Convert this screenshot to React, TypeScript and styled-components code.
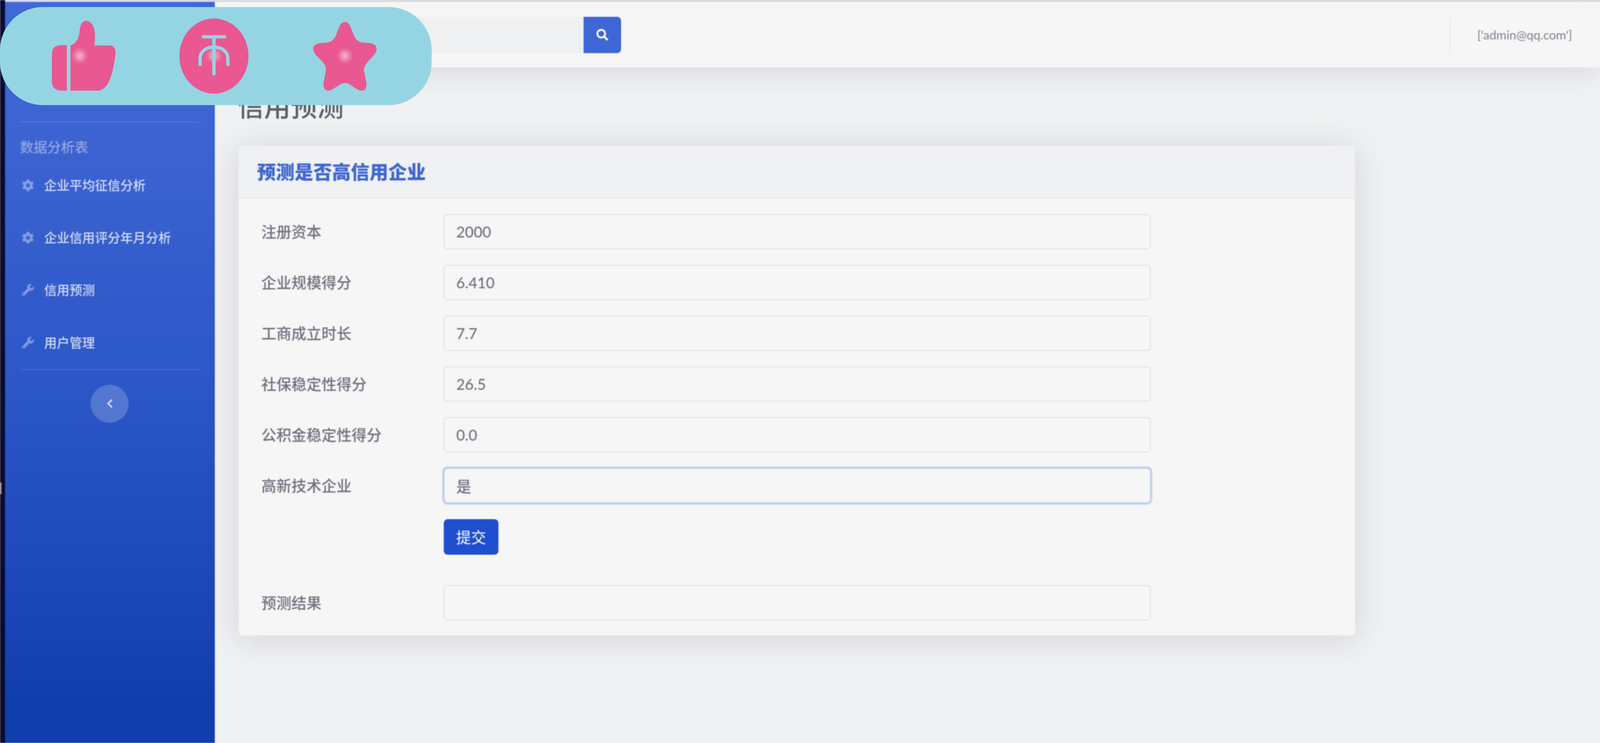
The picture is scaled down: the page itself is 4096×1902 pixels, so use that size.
import React from "react";
import styled, { createGlobalStyle } from "styled-components";
import { FaCog, FaWrench, FaChevronLeft, FaSearch } from "react-icons/fa";

const Global = createGlobalStyle`
  html, body { margin: 0; padding: 0; background: #f0f1f3; overflow: hidden; }
  * { box-sizing: border-box; }
  body { font-family: Lato, "Noto Sans CJK SC", sans-serif; }
`;

const Stage = styled.div`
  position: relative;
  width: 4096px;
  height: 1902px;
  overflow: hidden;
`;
const Shell = styled.div`
  display: flex;
  height: 100%;
  filter: blur(1.3px);
`;
const Strip = styled.div`
  position: relative;
  flex: 0 0 13px;
  background: #0c0c30;
`;
const StripMark = styled.span`
  position: absolute;
  left: 0;
  top: 1235px;
  width: 4px;
  height: 30px;
  background: #8f8f9c;
`;
const Sidebar = styled.aside`
  flex: 0 0 537px;
  border-top: 5px solid #d5d8ef;
  padding: 306px 40px 0 38px;
  background: linear-gradient(180deg, #4069d8 0%, #3d63d2 20%, #2c58c8 50%, #1f4abc 75%, #113ead 95%);
`;
const SideRule = styled.div`
  height: 2px;
  background: rgba(255, 255, 255, 0.13);
`;
const SideHeading = styled.div`
  margin-top: 41px;
  margin-bottom: 9px;
  font-size: 35px;
  line-height: 44px;
  font-weight: 500;
  color: rgba(255, 255, 255, 0.42);
`;
const NavItem = styled.div`
  display: flex;
  align-items: center;
  gap: 26px;
  height: 134.4px;
  padding-left: 5px;
  font-size: 32.5px;
  font-weight: 500;
  color: rgba(255, 255, 255, 0.78);
  span { position: relative; top: -2px; }
  svg { width: 31px; height: 31px; color: rgba(255, 255, 255, 0.38); flex: none; }
`;
const Toggle = styled.div`
  width: 97px;
  height: 97px;
  margin: 38px auto 0;
  border-radius: 50%;
  display: flex;
  align-items: center;
  justify-content: center;
  background: rgba(255, 255, 255, 0.2);
  color: rgba(255, 255, 255, 0.75);
  svg { width: 20px; height: 26px; }
`;
const Main = styled.main`
  flex: 1;
  min-width: 0;
  background: #f0f1f3;
`;
const TopBar = styled.header`
  display: flex;
  align-items: center;
  height: 173px;
  padding: 0 71px 0 50px;
  border-top: 5px solid #d9d9d9;
  background: #f6f6f6;
  box-shadow: 0 10px 70px rgba(58, 59, 69, 0.14);
  position: relative;
`;
const SearchInput = styled.div`
  width: 894px;
  height: 93px;
  background: #eef0f2;
`;
const SearchButton = styled.button`
  width: 96px;
  height: 93px;
  padding: 0;
  border: 0;
  border-radius: 0 10px 10px 0;
  background: #3e66d4;
  color: #fff;
  display: flex;
  align-items: center;
  justify-content: center;
  svg { width: 30px; height: 30px; }
`;
const TopDivider = styled.div`
  width: 2px;
  height: 93px;
  margin-left: auto;
  margin-right: 69px;
  background: #e6e7e8;
`;
const UserName = styled.span`
  font-size: 31.5px;
  color: #7d7f8e;
  white-space: nowrap;
`;
const Content = styled.div`
  padding: 59px 0 0 61px;
`;
const PageTitle = styled.h1`
  margin: 0 0 61px -3px;
  font-size: 68px;
  line-height: 80px;
  font-weight: 500;
  color: #5a5c69;
`;
const Card = styled.section`
  width: 2858px;
  border-radius: 10px;
  background: #f6f6f6;
  box-shadow: 0 8px 85px rgba(58, 59, 69, 0.16);
`;
const CardHeader = styled.div`
  display: flex;
  align-items: center;
  height: 135px;
  padding: 0 0 4px 47px;
  background: #eff1f3;
  border-bottom: 3px solid #e6e7ea;
  border-radius: 10px 10px 0 0;
`;
const CardTitle = styled.h2`
  margin: 0;
  font-size: 48px;
  font-weight: 900;
  color: #3f66d0;
`;
const CardBody = styled.div`
  padding: 40px 0 39px 58px;
`;
const Row = styled.div<{ $after?: number }>`
  display: flex;
  align-items: center;
  margin-bottom: ${(p) => p.$after ?? 40}px;
  &:last-child { margin-bottom: 0; }
`;
const Label = styled.label`
  flex: 0 0 467px;
  padding-bottom: 5px;
  font-size: 38.5px;
  font-weight: 500;
  color: #6e707e;
`;
const Field = styled.input<{ $focused?: boolean }>`
  width: 1810px;
  height: 90px;
  padding: 0 30px;
  border: 2.5px solid ${(p) => (p.$focused ? "#b9c8ec" : "#dcdde1")};
  border-radius: 10px;
  outline: 0;
  background: #f6f6f6;
  font: 500 38.5px Lato, "Noto Sans CJK SC", sans-serif;
  color: #6e707e;
  box-shadow: ${(p) => (p.$focused ? "0 0 0 4px rgba(78, 115, 223, 0.28)" : "none")};
`;
const Submit = styled.button`
  width: 140px;
  height: 91px;
  margin-left: 467px;
  padding: 0 0 3px;
  border: 0;
  border-radius: 10px;
  background: #1f4fcf;
  color: #fff;
  font: 400 38.5px Lato, "Noto Sans CJK SC", sans-serif;
`;
const Pill = styled.div`
  position: absolute;
  left: 0;
  top: 18px;
  width: 1105px;
  height: 251px;
  padding: 17px 0 0 105.6px;
  display: flex;
  align-items: flex-start;
  gap: 125.6px;
  border-radius: 110px;
  background: #95d5e3;
`;
const ActionIcon = styled.svg`
  flex: none;
  width: 211px;
  height: 211px;
`;

const PINK = "#e95890";
const CYAN = "#95d5e3";

const Glow = ({ id, cx }: { id: string; cx: number }) => (
  <>
    <defs>
      <radialGradient id={id}>
        <stop offset="0%" stopColor="#fff" stopOpacity="0.55" />
        <stop offset="45%" stopColor="#fff" stopOpacity="0.3" />
        <stop offset="100%" stopColor="#fff" stopOpacity="0" />
      </radialGradient>
    </defs>
    <circle cx={cx} cy={368} r={72} fill={`url(#${id})`} />
  </>
);

const ThumbIcon = () => (
  <ActionIcon viewBox="0 0 720 720">
    <path fill={PINK} d="M222 275H165Q92 280 92 350V595Q92 665 165 672H222Z" />
    <path
      fill={PINK}
      d="M254 277C300 262 325 225 332 165C338 110 350 62 390 62C440 62 468 120 468 190C468 225 466 255 463 277H595C630 277 648 305 648 340C640 420 625 500 600 570C575 635 540 672 490 672H254Z"
    />
    <Glow id="g1" cx={335} />
  </ActionIcon>
);

const TopIcon = () => (
  <ActionIcon viewBox="7.5 0 720 720">
    <ellipse fill={PINK} cx={368} cy={370} rx={302} ry={328} />
    <Glow id="g2" cx={368} />
    <g fill="none" stroke={CYAN} strokeWidth={29} strokeLinecap="round">
      <path d="M276 202H462" />
      <path d="M368 202V526" />
      <path d="M247 444V395C247 330 300 292 368 292C436 292 490 330 490 395V444" />
    </g>
  </ActionIcon>
);

const StarIcon = () => (
  <ActionIcon viewBox="0 0 720 720">
    <path
      fill={PINK}
      d="M355 72C395 72 405 120 425 170C445 220 465 250 520 253C590 255 632 265 632 310C632 345 590 380 560 415C530 450 518 470 522 500C530 545 543 590 543 625C543 655 525 673 500 673C455 673 400 605 355 605C310 605 250 673 210 673C185 673 167 655 167 625C167 590 180 545 188 500C192 470 180 440 150 410C120 380 78 345 78 310C78 265 120 255 190 253C245 250 265 220 285 170C305 120 315 72 355 72Z"
    />
    <Glow id="g3" cx={355} />
  </ActionIcon>
);

const fields = [
  { label: "注册资本", value: "2000" },
  { label: "企业规模得分", value: "6.410" },
  { label: "工商成立时长", value: "7.7" },
  { label: "社保稳定性得分", value: "26.5" },
  { label: "公积金稳定性得分", value: "0.0" },
];

export default function App() {
  return (
    <Stage>
      <Global />
      <Shell>
        <Strip>
          <StripMark />
        </Strip>
        <Sidebar>
          <SideRule />
          <SideHeading>数据分析表</SideHeading>
          <NavItem><FaCog /><span>企业平均征信分析</span></NavItem>
          <NavItem><FaCog /><span>企业信用评分年月分析</span></NavItem>
          <NavItem><FaWrench /><span>信用预测</span></NavItem>
          <NavItem><FaWrench /><span>用户管理</span></NavItem>
          <SideRule />
          <Toggle><FaChevronLeft /></Toggle>
        </Sidebar>
        <Main>
          <TopBar>
            <SearchInput />
            <SearchButton><FaSearch /></SearchButton>
            <TopDivider />
            <UserName>['admin@qq.com']</UserName>
          </TopBar>
          <Content>
            <PageTitle>信用预测</PageTitle>
            <Card>
              <CardHeader>
                <CardTitle>预测是否高信用企业</CardTitle>
              </CardHeader>
              <CardBody>
                {fields.map((f) => (
                  <Row key={f.label}>
                    <Label>{f.label}</Label>
                    <Field readOnly value={f.value} />
                  </Row>
                ))}
                <Row $after={41}>
                  <Label>高新技术企业</Label>
                  <Field readOnly value="是" $focused />
                </Row>
                <Row $after={78}>
                  <Submit>提交</Submit>
                </Row>
                <Row>
                  <Label>预测结果</Label>
                  <Field readOnly value="" />
                </Row>
              </CardBody>
            </Card>
          </Content>
        </Main>
      </Shell>
      <Pill>
        <ThumbIcon />
        <TopIcon />
        <StarIcon />
      </Pill>
    </Stage>
  );
}
